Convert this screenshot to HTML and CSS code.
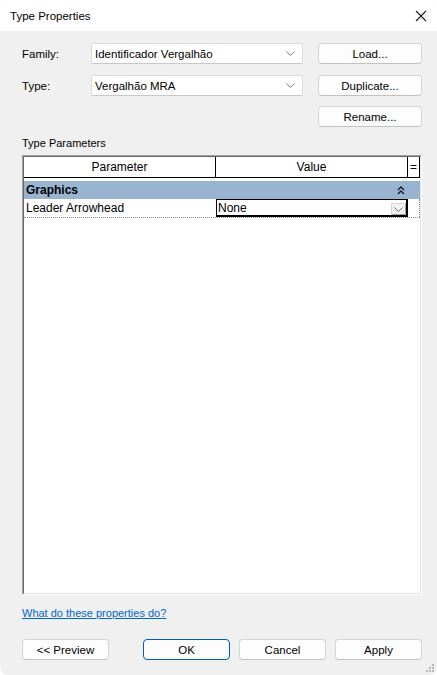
FILE: index.html
```html
<!DOCTYPE html>
<html lang="pt">
<head>
<meta charset="utf-8">
<title>Type Properties</title>
<link rel="stylesheet" href="styles.css">
</head>
<body>
<div class="window">
  <div class="titlebar">
    <span class="title">Type Properties</span>
    <svg class="close" width="12" height="12" viewBox="0 0 12 12"><path d="M1 1 L11 11 M11 1 L1 11" stroke="#1a1a1a" stroke-width="1.1" fill="none"/></svg>
  </div>
  <div class="content">
    <div class="form">
      <div class="row">
        <span class="label">Family:</span>
        <div class="combo"><span class="combo-text">Identificador Vergalhão</span><svg class="chev" width="9" height="5" viewBox="0 0 9 5"><path d="M0.5 0.5 L4.5 4.5 L8.5 0.5" stroke="#808080" stroke-width="1" fill="none"/></svg></div>
        <button class="btn btn-side">Load...</button>
      </div>
      <div class="row row-type">
        <span class="label">Type:</span>
        <div class="combo"><span class="combo-text">Vergalhão MRA</span><svg class="chev" width="9" height="5" viewBox="0 0 9 5"><path d="M0.5 0.5 L4.5 4.5 L8.5 0.5" stroke="#808080" stroke-width="1" fill="none"/></svg></div>
        <button class="btn btn-side">Duplicate...</button>
      </div>
      <div class="row row-rename">
        <button class="btn btn-side">Rename...</button>
      </div>
    </div>

    <div class="section-label">Type Parameters</div>

    <div class="grid">
      <div class="grid-inner">
        <div class="ghead">
          <div class="hcell hparam">Parameter</div>
          <div class="hcell hvalue">Value</div>
          <div class="hcell heq">=</div>
        </div>
        <div class="group">
          <span class="group-name">Graphics</span>
          <svg class="collapse" width="8" height="9" viewBox="0 0 8 9"><path d="M1 4 L4 1 L7 4 M1 8 L4 5 L7 8" stroke="#1a1a1a" stroke-width="1.3" fill="none"/></svg>
        </div>
        <div class="prow">
          <div class="pname">Leader Arrowhead</div>
          <div class="pvalue">
            <span class="pvalue-text">None</span>
            <div class="ddbtn"><svg width="9" height="5" viewBox="0 0 9 5"><path d="M0.5 0.5 L4.5 4.5 L8.5 0.5" stroke="#6d6d6d" stroke-width="1" fill="none"/></svg></div>
          </div>
          <div class="pfill"></div>
        </div>
      </div>
    </div>

    <a class="help" href="#">What do these properties do?</a>

    <div class="actions">
      <button class="btn btn-act">&lt;&lt; Preview</button>
      <div class="actions-right">
        <button class="btn btn-act btn-default">OK</button>
        <button class="btn btn-act">Cancel</button>
        <button class="btn btn-act">Apply</button>
      </div>
    </div>
  </div>
  <svg class="grip" width="10" height="10" viewBox="0 0 10 10">
    <rect x="7" y="1" width="2" height="2" fill="#b8b8b8"/>
    <rect x="4" y="4" width="2" height="2" fill="#b8b8b8"/>
    <rect x="7" y="4" width="2" height="2" fill="#b8b8b8"/>
    <rect x="1" y="7" width="2" height="2" fill="#b8b8b8"/>
    <rect x="4" y="7" width="2" height="2" fill="#b8b8b8"/>
    <rect x="7" y="7" width="2" height="2" fill="#b8b8b8"/>
  </svg>
</div>
</body>
</html>
```
FILE: styles.css
```css
* { box-sizing: border-box; }
html, body {
  margin: 0;
  padding: 0;
  background: #ffffff;
}
body {
  width: 437px;
  height: 675px;
  overflow: hidden;
  font-family: "Segoe UI", "Liberation Sans", Arial, sans-serif;
  font-size: 11.5px;
  color: #000;
}
.window {
  position: relative;
  width: 437px;
  height: 675px;
  background: #f0f0f0;
  border-radius: 8px;
  overflow: hidden;
}
.titlebar {
  height: 31px;
  background: #ffffff;
  display: flex;
  align-items: center;
  justify-content: space-between;
  padding: 0 10px 0 10px;
}
.title {
  font-size: 11.5px;
  line-height: 16px;
}
.close {
  display: block;
}
.content {
  padding: 0 15px 0 22px;
}
.form {
  display: flex;
  flex-direction: column;
  padding-top: 12px;
}
.row {
  display: flex;
  align-items: center;
  height: 21px;
}
.row-type { margin-top: 11px; }
.row-rename { margin-top: 10px; justify-content: flex-end; }
.label {
  width: 69px;
  line-height: 16px;
}
.combo {
  width: 212px;
  height: 21px;
  background: #ffffff;
  border: 1px solid #dcdcdc;
  border-bottom-color: #c8c8c8;
  border-radius: 2px;
  display: flex;
  align-items: center;
  justify-content: space-between;
  padding: 0 7px 0 3px;
}
.combo-text { line-height: 16px; }
.chev { display: block; }
.btn {
  font-family: "Segoe UI", "Liberation Sans", Arial, sans-serif;
  font-size: 11.5px;
  color: #000;
  background: #fdfdfd;
  border: 1px solid #d4d4d4;
  border-bottom-color: #c2c2c2;
  border-radius: 4px;
  height: 21px;
  padding: 0;
  line-height: 18px;
  text-align: center;
}
.btn-side {
  width: 104px;
  margin-left: 15px;
}
.section-label {
  margin-top: 8px;
  line-height: 16px;
  font-size: 11px;
}
.grid {
  margin-top: 4px;
  width: 400px;
  height: 440px;
  border: 1px solid;
  border-color: #a0a0a0 #ffffff #ffffff #a0a0a0;
  background: #ffffff;
}
.grid-inner {
  height: 100%;
  border: 1px solid;
  border-color: #696969 #e3e3e3 #e3e3e3 #696969;
  background: #ffffff;
  font-family: "Liberation Sans", Arial, sans-serif;
  font-size: 12px;
}
.ghead {
  display: flex;
  height: 21px;
  border-bottom: 1px solid #000;
}
.hcell {
  height: 20px;
  line-height: 20px;
  text-align: center;
  border-right: 1px solid #000;
}
.hparam { width: 192px; }
.hvalue { width: 192px; }
.heq { width: 12px; }
.group {
  margin-top: 3px;
  height: 18px;
  background: #99b4d1;
  display: flex;
  align-items: center;
  justify-content: space-between;
  padding: 0 15px 0 2px;
}
.group-name {
  font-weight: bold;
  line-height: 18px;
}
.collapse { display: block; }
.prow {
  display: flex;
  height: 19px;
  border-bottom: 1px dotted #8c8c8c;
}
.pname {
  width: 192px;
  line-height: 18px;
  padding-left: 2px;
}
.pvalue {
  width: 192px;
  height: 18px;
  border: 1px solid #000;
  border-right-width: 2px;
  border-bottom-width: 2px;
  display: flex;
  justify-content: space-between;
  align-items: flex-end;
  background: #fff;
}
.pvalue-text {
  line-height: 15px;
  padding-left: 1px;
  padding-top: 2px;
  align-self: center;
}
.ddbtn {
  width: 15px;
  height: 12px;
  background: #f3f3f3;
  border: 1px solid #d6d6d6;
  border-right-color: #a0a0a0;
  border-bottom-color: #a0a0a0;
  display: flex;
  align-items: center;
  justify-content: center;
}
.ddbtn svg { display: block; }
.pfill {
  flex: 1;
  border-right: 1px dotted #8c8c8c;
}
.help {
  display: inline-block;
  margin-top: 10px;
  line-height: 16px;
  font-size: 11px;
  color: #0066cc;
  text-decoration: underline;
}
.actions {
  margin-top: 18px;
  display: flex;
  justify-content: space-between;
}
.actions-right {
  display: flex;
  gap: 9px;
}
.btn-act {
  width: 87px;
}
.btn-default {
  border: 1px solid #005fb8;
}
.grip {
  position: absolute;
  right: 2px;
  bottom: 2px;
  display: block;
}
```
